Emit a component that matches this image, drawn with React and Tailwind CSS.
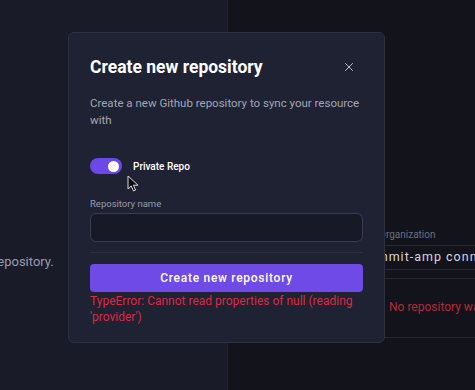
import { X } from "lucide-react";

const font = { fontFamily: "Roboto, 'Noto Sans', sans-serif" };

const Cursor = () => (
  <svg width="13" height="17" viewBox="0 0 13 17" className="absolute left-[127px] top-[175px]">
    <path d="M1 1 L1 14 L4.2 11 L6.5 16 L8.6 15 L6.4 10.2 L11 10.2 Z" fill="#0b0b10" stroke="#d9d9de" strokeWidth="1" strokeLinejoin="round" />
  </svg>
);

export default function App() {
  return (
    <div style={font} className="relative flex h-[390px] w-[475px] overflow-hidden bg-[#13131c]">
      {/* page behind */}
      <div className="flex w-[227px] shrink-0 flex-col bg-[#191b28] pt-[252px]">
        <p className="-ml-[7px] text-[13px] text-[#9a9cab]">repository.</p>
      </div>
      <div className="flex min-w-0 flex-1 flex-col overflow-hidden border-l border-[#1f2130] pl-[151px] pt-[227px]">
        <span className="text-[10px] text-[#6b6e7e]">Organization</span>
        <div className="mt-[3px] border-y border-[#262836] py-[2px]">
          <span className="-ml-[18px] block whitespace-nowrap text-[12.5px] tracking-[0.08em] text-[#d4d5dc]">commit-amp connector</span>
        </div>
        <div className="mt-[8px] h-[60px] border-y border-[#262836] pt-[19px]">
          <span className="block whitespace-nowrap pl-[10px] text-[12px] text-[#b42a3a]">No repository was found</span>
        </div>
      </div>

      {/* modal */}
      <div className="absolute left-[68px] top-[32px] flex h-[311px] w-[317px] flex-col rounded-[6px] border border-[#2d3040] bg-[#1f2232] px-[21px] pt-[23px]">
        <div className="flex items-center justify-between">
          <h2 className="text-[17.5px] font-bold leading-[22px] text-white">Create new repository</h2>
          <X size={14} strokeWidth={1.6} className="mr-[7px] text-[#c9cad3]" />
        </div>
        <p className="mt-[17px] text-[11.5px] leading-[17px] text-[#a3a6b5]">
          Create a new Github repository to sync your resource with
        </p>
        <div className="mt-[29px] flex items-center gap-[11px]">
          <div className="flex h-[16px] w-[32px] items-center justify-end rounded-full bg-[#6d48e8] pr-[3px]">
            <div className="h-[11px] w-[11px] rounded-full bg-white" />
          </div>
          <span className="text-[10px] font-medium text-white">Private Repo</span>
        </div>
        <label className="mt-[23px] text-[9.5px] text-[#9a9cab]">Repository name</label>
        <div className="mt-[2px] h-[29px] rounded-[6px] border border-[#3a3d4e] bg-[#171927]" />
        <div className="mt-[10px] border-t border-[#2b2e3e]" />
        <button className="mt-[11px] h-[28px] rounded-[4px] bg-[#6f4ae6] text-[12px] font-medium tracking-[0.06em] text-white">
          Create new repository
        </button>
        <p className="mt-[1px] text-[12px] leading-[16px] text-[#dc2a3e]">
          TypeError: Cannot read properties of null (reading 'provider')
        </p>
      </div>
      <Cursor />
    </div>
  );
}
